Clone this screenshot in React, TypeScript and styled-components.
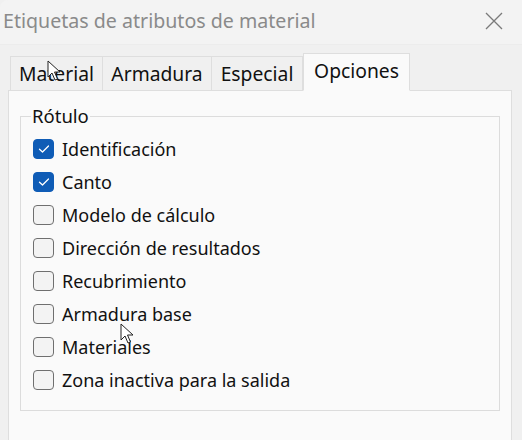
import styled, { createGlobalStyle } from 'styled-components';

const GlobalStyle = createGlobalStyle`
  html, body {
    margin: 0;
    padding: 0;
    background: #f0f0f0;
  }
  body {
    font-family: 'Noto Sans', 'Open Sans', sans-serif;
    overflow: hidden;
  }
`;

type Option = { label: string; checked: boolean };

const options: Option[] = [
  { label: 'Identificación', checked: true },
  { label: 'Canto', checked: true },
  { label: 'Modelo de cálculo', checked: false },
  { label: 'Dirección de resultados', checked: false },
  { label: 'Recubrimiento', checked: false },
  { label: 'Armadura base', checked: false },
  { label: 'Materiales', checked: false },
  { label: 'Zona inactiva para la salida', checked: false },
];

const tabs = [
  { label: 'Material', width: 93 },
  { label: 'Armadura', width: 109 },
  { label: 'Especial', width: 91 },
  { label: 'Opciones', width: 107 },
];

const Cursor = ({ x, y }: { x: number; y: number }) => (
  <CursorMark style={{ left: x, top: y }} width='14' height='22' viewBox='0 0 14 22'>
    <path
      d='M1 1 L1 17 L5 13 L8 20 L10.5 19 L7.5 12 L13 12 Z'
      fill='#ffffff'
      stroke='#222'
      strokeWidth='1'
      strokeLinejoin='round'
    />
  </CursorMark>
);

const App = () => {
  const active = 'Opciones';

  return (
    <Window>
      <GlobalStyle />
      <TitleBar>
        <Title>Etiquetas de atributos de material</Title>
        <CloseBtn width='18' height='18' viewBox='0 0 18 18'>
          <path d='M1 1 L17 17 M17 1 L1 17' stroke='#7a7a7a' strokeWidth='1.3' />
        </CloseBtn>
      </TitleBar>
      <Body>
        <TabStrip>
          {tabs.map((t) => (
            <Tab key={t.label} $active={t.label === active} $width={t.width}>
              {t.label}
            </Tab>
          ))}
        </TabStrip>
        <Panel>
          <Group>
            <Legend>Rótulo</Legend>
            {options.map((o) => (
              <Row key={o.label}>
                <Box $checked={o.checked}>
                  {o.checked && (
                    <svg width='12' height='10' viewBox='0 0 12 10'>
                      <path
                        d='M1.5 5.2 L4.5 8 L10.5 2'
                        fill='none'
                        stroke='#ffffff'
                        strokeWidth='1.3'
                        strokeLinecap='round'
                        strokeLinejoin='round'
                      />
                    </svg>
                  )}
                </Box>
                <Label>{o.label}</Label>
              </Row>
            ))}
          </Group>
        </Panel>
      </Body>
      <Cursor x={47} y={60} />
      <Cursor x={120} y={323} />
    </Window>
  );
};

export default App;

const Window = styled.div`
  position: relative;
  width: 522px;
  height: 440px;
  overflow: hidden;
  background: #f0f0f0;
  border-top-left-radius: 8px;
`;

const TitleBar = styled.div`
  height: 44px;
  display: flex;
  align-items: center;
  justify-content: space-between;
  padding: 0 19px 0 3px;
  background: #f3f3f3;
  border-bottom: 1px solid #ececec;
`;

const Title = styled.div`
  font-size: 19.6px;
  color: #8a8a8a;
  margin-top: -3px;
`;

const CloseBtn = styled.svg`
  display: block;
  margin-top: -3px;
`;

const Body = styled.div`
  padding: 0 10px 0 8px;
`;

const TabStrip = styled.div`
  display: flex;
  align-items: flex-end;
  height: 45px;
  padding-left: 2px;
`;

const Tab = styled.div<{ $active: boolean; $width: number }>`
  box-sizing: border-box;
  width: ${(p) => p.$width}px;
  height: ${(p) => (p.$active ? 38 : 35)}px;
  display: flex;
  align-items: center;
  justify-content: center;
  padding-bottom: ${(p) => (p.$active ? 4 : 1)}px;
  font-size: 19.3px;
  color: #111;
  background: ${(p) => (p.$active ? '#fafafa' : '#f0f0f0')};
  border: 1px solid #dedede;
  border-left-width: ${(p) => (p.$active ? 1 : 0)}px;
  border-bottom: ${(p) => (p.$active ? '1px solid #fafafa' : '1px solid #dedede')};
  margin-bottom: -1px;
  position: relative;
  z-index: ${(p) => (p.$active ? 2 : 1)};
  &:first-child {
    border-left-width: 1px;
  }
`;

const Panel = styled.div`
  box-sizing: border-box;
  height: 360px;
  background: #fafafa;
  border: 1px solid #dedede;
  padding: 14px 11px 0 11px;
`;

const Group = styled.fieldset`
  margin: 0;
  padding: 5px 0 14px 12px;
  border: 1px solid #dcdcdc;
  display: flex;
  flex-direction: column;
`;

const Legend = styled.legend`
  font-size: 18.5px;
  line-height: 22px;
  color: #111;
  padding: 0 1px;
  margin-left: -2px;
`;

const Row = styled.div`
  height: 33px;
  display: flex;
  align-items: center;
  gap: 8px;
`;

const Box = styled.div<{ $checked: boolean }>`
  box-sizing: border-box;
  width: 21px;
  height: 20px;
  border-radius: 4px;
  display: flex;
  align-items: center;
  justify-content: center;
  background: ${(p) => (p.$checked ? '#0f5cb6' : '#f3f3f3')};
  border: ${(p) => (p.$checked ? '1px solid #0f5cb6' : '1.5px solid #6f6f6f')};
`;

const Label = styled.span`
  font-size: 18px;
  color: #111;
`;

const CursorMark = styled.svg`
  position: absolute;
  pointer-events: none;
  z-index: 10;
`;
